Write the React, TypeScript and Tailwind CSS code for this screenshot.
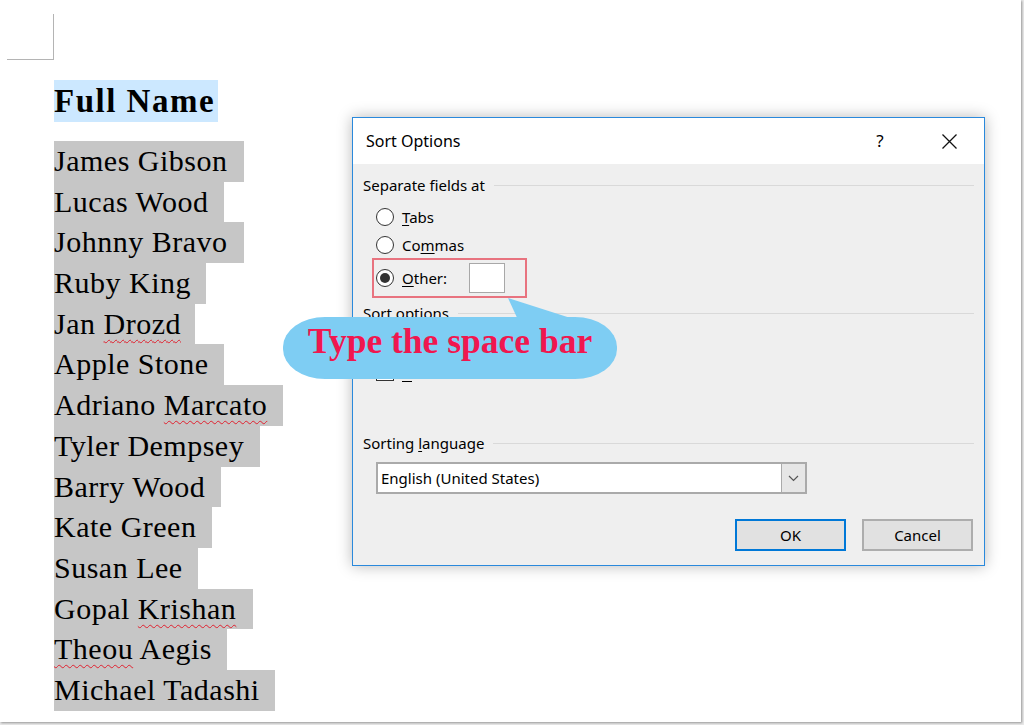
import React from "react";

// 名单数据（高亮宽度写成完整类名）
const names = [
	{ first: "James", last: "Gibson", w: "w-[190px]" },
	{ first: "Lucas", last: "Wood", w: "w-[170px]" },
	{ first: "Johnny", last: "Bravo", w: "w-[190px]" },
	{ first: "Ruby", last: "King", w: "w-[152px]" },
	{ first: "Jan", last: "Drozd", w: "w-[141px]", wavyLast: true },
	{ first: "Apple", last: "Stone", w: "w-[170px]" },
	{ first: "Adriano", last: "Marcato", w: "w-[229px]", wavyLast: true },
	{ first: "Tyler", last: "Dempsey", w: "w-[206px]" },
	{ first: "Barry", last: "Wood", w: "w-[167px]" },
	{ first: "Kate", last: "Green", w: "w-[158px]" },
	{ first: "Susan", last: "Lee", w: "w-[144px]" },
	{ first: "Gopal", last: "Krishan", w: "w-[199px]", wavyLast: true },
	{ first: "Theou", last: "Aegis", w: "w-[173px]", wavyFirst: true },
	{ first: "Michael", last: "Tadashi", w: "w-[221px]" },
];

const wavy =
	"underline decoration-wavy decoration-[#e0202e] decoration-1 underline-offset-[5px]";

const NameRow = ({ item }: { item: (typeof names)[number] }) => {
	return (
		<div className="h-[40.7px] leading-[40.7px]">
			<span className={`inline-block h-full bg-[#c6c6c6] whitespace-nowrap ${item.w}`}>
				<span className={item.wavyFirst ? wavy : ""}>{item.first}</span>{" "}
				<span className={item.wavyLast ? wavy : ""}>{item.last}</span>
			</span>
		</div>
	);
};

const Radio = ({ checked }: { checked?: boolean }) => (
	<span className="w-[18px] h-[18px] rounded-full border border-[#333] bg-white flex items-center justify-center shrink-0">
		{checked && <span className="w-[10px] h-[10px] rounded-full bg-[#333]" />}
	</span>
);

const GroupLabel = ({ children }: { children: React.ReactNode }) => (
	<div className="h-[20px] flex items-center gap-[9px]">
		<span className="whitespace-nowrap">{children}</span>
		<div className="flex-1 h-px bg-[#d9d9d9]" />
	</div>
);

const SortDialog = () => {
	return (
		<div className="absolute left-[352px] top-[117px] w-[633px] h-[449px] border border-[#2a89dc] bg-[#efefef] shadow-[0_0_14px_rgba(0,0,0,0.28)] font-['Noto_Sans',sans-serif] text-[15px] text-black flex flex-col">
			{/* 标题栏 */}
			<div className="h-[46px] bg-white flex items-center pl-[13px] pr-[20px]">
				<span className="text-[16px]">Sort Options</span>
				<span className="ml-auto w-[30px] text-center text-[17px]">?</span>
				<span className="ml-[39px] w-[30px] flex justify-center">
					<svg width="15" height="15" viewBox="0 0 15 15">
						<path d="M0.5 0.5 L14.5 14.5 M14.5 0.5 L0.5 14.5" stroke="#111" strokeWidth="1.3" />
					</svg>
				</span>
			</div>

			{/* 内容 */}
			<div className="flex-1 flex flex-col px-[10px] pt-[11px]">
				<GroupLabel>Separate fields at</GroupLabel>
				<div className="mt-[12px] h-[20px] pl-[13px] flex items-center gap-[8px]">
					<Radio />
					<span>
						<span className="underline underline-offset-2">T</span>abs
					</span>
				</div>
				<div className="mt-[8px] h-[20px] pl-[13px] flex items-center gap-[8px]">
					<Radio />
					<span>
						Co<span className="underline underline-offset-2">m</span>mas
					</span>
				</div>
				<div className="mt-[3px] ml-[9px] w-[155px] h-[40px] border-2 border-[#e8737f] pl-[2px] pr-[20px] flex items-center gap-[8px]">
					<Radio checked />
					<span>
						<span className="underline underline-offset-2">O</span>ther:
					</span>
					<span className="ml-auto w-[36px] h-[30px] bg-white border border-[#a8a8a8]" />
				</div>
				<div className="mt-[5px]">
					<GroupLabel>Sort options</GroupLabel>
				</div>
				{/* 被气泡遮住的复选框，只露出底边和下划线 */}
				<div className="mt-[12px] h-[20px] pl-[13px] flex items-center">
					<span className="w-[18px] h-[18px] border border-[#333] bg-white shrink-0" />
				</div>
				<div className="mt-[7px] h-[20px] pl-[13px] flex items-center gap-[8px]">
					<span className="w-[18px] h-[18px] border border-[#333] bg-white shrink-0" />
					<span className="self-end w-[10px] h-px bg-black" />
				</div>
				<div className="mt-[51px]">
					<GroupLabel>
						Sorting <span className="underline underline-offset-2">l</span>anguage
					</GroupLabel>
				</div>
				<div className="mt-[9px] ml-[13px] w-[431px] h-[32px] border-2 border-[#aaaaaa] bg-white flex">
					<span className="flex-1 pl-[3px] flex items-center">English (United States)</span>
					<span className="w-[24px] bg-[#e6e6e6] border-l border-[#aaaaaa] flex items-center justify-center">
						<svg width="11" height="7" viewBox="0 0 11 7">
							<path d="M1 1 L5.5 5.5 L10 1" fill="none" stroke="#555" strokeWidth="1.2" />
						</svg>
					</span>
				</div>
				<div className="mt-[25px] flex justify-end gap-[16px] pr-[1px]">
					<button className="w-[111px] h-[32px] bg-[#e1e1e1] border-2 border-[#0078d7]">OK</button>
					<button className="w-[111px] h-[32px] bg-[#e1e1e1] border-2 border-[#adadad]">Cancel</button>
				</div>
			</div>
		</div>
	);
};

// 提示气泡
const Callout = () => (
	<div className="absolute left-[283px] top-[298px] w-[334px] h-[81px]">
		<svg className="absolute inset-0" width="334" height="81" viewBox="0 0 334 81">
			<rect x="0" y="19" width="334" height="62" rx="42" ry="30" fill="#7ecdf3" />
			<polygon points="225,0 236,24 300,24" fill="#7ecdf3" />
		</svg>
		<div className="absolute left-0 right-0 top-[25px] leading-[36px] text-center font-['Liberation_Serif',serif] font-bold text-[35.5px] text-[#f0174f] whitespace-nowrap">
			Type the space bar
		</div>
	</div>
);

export default function App() {
	return (
		<div className="relative w-[1024px] h-[725px] bg-[#e8e8e8] overflow-hidden">
			<div className="w-[1021px] h-[722px] bg-white shadow-[1px_1px_2px_rgba(0,0,0,0.35)] font-['Liberation_Serif',serif] text-black">
				{/* 页边角标记 */}
				<div className="ml-[7px] pt-[14px]">
					<div className="w-[47px] h-[46px] border-r border-b border-[#b4b4b4]" />
				</div>
				<div className="pl-[54px] pt-[20px]">
					<div className="h-[42px] leading-[42px]">
						<span className="inline-block h-full w-[164px] bg-[#cce8ff] font-bold text-[33px] tracking-[1.5px] whitespace-nowrap">
							Full Name
						</span>
					</div>
					<div className="mt-[19px] text-[30px] tracking-[0.5px]">
						{names.map((n) => (
							<NameRow key={n.first + n.last} item={n} />
						))}
					</div>
				</div>
			</div>
			<SortDialog />
			<Callout />
		</div>
	);
}
